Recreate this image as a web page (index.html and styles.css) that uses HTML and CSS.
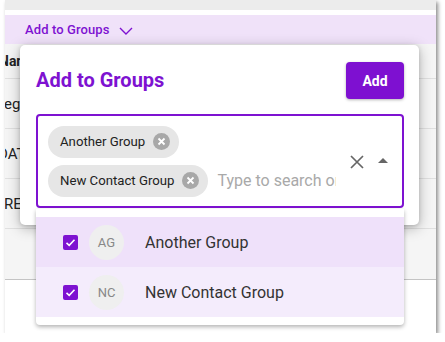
FILE: index.html
```html
<!DOCTYPE html>
<html>
<head>
<meta charset="utf-8">
<link rel="stylesheet" href="styles.css">
</head>
<body>
<div class="frame">
  <div class="topstrip"></div>
  <div class="band">
    <span class="band-label">Add to Groups</span>
    <svg class="chev" width="14" height="8" viewBox="0 0 14 8"><path d="M1 1 L7 7 L13 1" fill="none" stroke="#7e12d1" stroke-width="1.4"/></svg>
  </div>
  <div class="table">
    <div class="row head"><span class="cell c0">Name</span></div>
    <div class="row"><span class="cell c1">Legal</span></div>
    <div class="row"><span class="cell c2">DATA</span></div>
    <div class="row"><span class="cell c3">RETAIL</span></div>
    <div class="row last"></div>
  </div>

  <div class="dialog">
    <div class="dlg-head">
      <h1 class="dlg-title">Add to Groups</h1>
      <button class="add-btn">Add</button>
    </div>
    <div class="field">
      <div class="chips">
        <div class="chip-line">
          <span class="chip">Another Group<span class="chip-x"><svg width="17" height="17" viewBox="0 0 17 17"><circle cx="8.5" cy="8.5" r="8.5" fill="#a8a8a8"/><path d="M5.5 5.5 L11.5 11.5 M11.5 5.5 L5.5 11.5" stroke="#fff" stroke-width="1.8"/></svg></span></span>
        </div>
        <div class="chip-line">
          <span class="chip">New Contact Group<span class="chip-x"><svg width="17" height="17" viewBox="0 0 17 17"><circle cx="8.5" cy="8.5" r="8.5" fill="#a8a8a8"/><path d="M5.5 5.5 L11.5 11.5 M11.5 5.5 L5.5 11.5" stroke="#fff" stroke-width="1.8"/></svg></span></span>
          <span class="placeholder">Type to search or add</span>
        </div>
      </div>
      <div class="field-icons">
        <svg width="14" height="14" viewBox="0 0 14 14"><path d="M1 1 L13 13 M13 1 L1 13" stroke="#666" stroke-width="1.7"/></svg>
        <svg class="tri" width="10" height="5" viewBox="0 0 10 5"><path d="M0 5 L5 0 L10 5 Z" fill="#666"/></svg>
      </div>
    </div>
  </div>

  <div class="menu">
    <div class="opt sel">
      <span class="cb"><svg width="15" height="15" viewBox="0 0 15 15"><path d="M3.5 7.8 L6.2 10.3 L11.5 4.8" fill="none" stroke="#fff" stroke-width="1.6"/></svg></span>
      <span class="avatar">AG</span>
      <span class="opt-text">Another Group</span>
    </div>
    <div class="opt sel2">
      <span class="cb"><svg width="15" height="15" viewBox="0 0 15 15"><path d="M3.5 7.8 L6.2 10.3 L11.5 4.8" fill="none" stroke="#fff" stroke-width="1.6"/></svg></span>
      <span class="avatar">NC</span>
      <span class="opt-text">New Contact Group</span>
    </div>
  </div>
</div>
</body>
</html>
```
FILE: styles.css
```css
* { box-sizing: border-box; }
html, body { margin: 0; padding: 0; background: #fff; }
body { font-family: Roboto, "Noto Sans", sans-serif; }

.frame {
  position: relative;
  margin-left: 5px;
  width: 431px;
  height: 333px;
  overflow: hidden;
  background: #fff;
  box-shadow: 2px 2px 4px rgba(0,0,0,0.45);
}
.topstrip {
  height: 10px;
  background: #ececec;
  margin-bottom: 5px;
}
.band {
  height: 29px;
  background: #f0e2f9;
  display: flex;
  align-items: center;
  padding-left: 20px;
  gap: 10px;
}
.band-label {
  font-size: 13px;
  font-weight: 500;
  color: #7e12d1;
  letter-spacing: 0.1px;
}
.chev { margin-top: 2px; }

.table { background: #f5f5f5; }
.row {
  height: 50px;
  border-bottom: 1px solid #e0e0e0;
  display: flex;
  align-items: center;
  font-size: 15px;
  color: #222;
}
.row.head { height: 35px; font-size: 14px; font-weight: 700; border-bottom: 1px solid #e0e0e0; }
.row.last { height: 51px; border-bottom: 1px solid #c4c4c4; }
.cell { white-space: nowrap; }
.cell.c0 { margin-left: -6px; }
.cell.c1 { margin-left: -9px; }
.cell.c2 { margin-left: -7px; }
.cell.c3 { margin-left: -1px; }

.dialog {
  position: absolute;
  left: 15px;
  top: 45px;
  width: 399px;
  height: 180px;
  background: #fff;
  border-radius: 5px;
  box-shadow: 0 3px 14px rgba(0,0,0,0.28), 0 1px 4px rgba(0,0,0,0.15);
  padding: 17px 15px 17px 16px;
  display: flex;
  flex-direction: column;
  gap: 15px;
}
.dlg-head {
  display: flex;
  justify-content: space-between;
  align-items: center;
}
.dlg-title {
  margin: 0;
  margin-top: -2px;
  font-size: 20px;
  font-weight: 700;
  color: #7e12d1;
}
.add-btn {
  width: 58px;
  height: 37px;
  border: 0;
  border-radius: 4px;
  background: #7e10d1;
  color: #fff;
  font-family: Roboto, sans-serif;
  font-size: 14px;
  font-weight: 700;
  box-shadow: 0 1px 3px rgba(0,0,0,0.3);
}
.field {
  height: 94px;
  border: 2px solid #7e12d1;
  border-radius: 4px;
  display: flex;
  align-items: center;
  padding: 0 0 0 10px;
}
.chips {
  width: 288px;
  display: flex;
  flex-direction: column;
  gap: 7px;
  overflow: hidden;
}
.chip-line { display: flex; align-items: center; white-space: nowrap; }
.chip {
  display: inline-flex;
  align-items: center;
  height: 32px;
  border-radius: 16px;
  background: #e6e6e6;
  padding: 0 9px 0 12px;
  font-size: 13.2px;
  color: #222;
  gap: 8px;
  flex-shrink: 0;
}
.chip-x { display: flex; }
.placeholder {
  margin-left: 9px;
  font-size: 16px;
  color: #a9a9a9;
}
.field-icons {
  display: flex;
  align-items: center;
  margin-left: 14px;
  gap: 14px;
  margin-top: 2px;
}
.tri { margin-top: -4px; }

.menu {
  position: absolute;
  left: 31px;
  top: 209px;
  width: 368px;
  background: #fff;
  border-radius: 0 0 4px 4px;
  box-shadow: 0 2px 4px rgba(0,0,0,0.3);
  padding: 8px 0;
}
.opt {
  height: 50px;
  display: flex;
  align-items: center;
  padding-left: 27px;
}
.opt.sel { background: #efe1fa; }
.opt.sel2 { background: #f4ecfc; }
.cb {
  width: 15px;
  height: 15px;
  border-radius: 2px;
  background: #7e12d1;
  display: flex;
}
.avatar {
  margin-left: 11px;
  width: 35px;
  height: 35px;
  border-radius: 50%;
  background: #efefef;
  color: #888;
  font-size: 13px;
  display: flex;
  align-items: center;
  justify-content: center;
}
.opt-text {
  margin-left: 21px;
  font-size: 16px;
  color: #333;
}
```
